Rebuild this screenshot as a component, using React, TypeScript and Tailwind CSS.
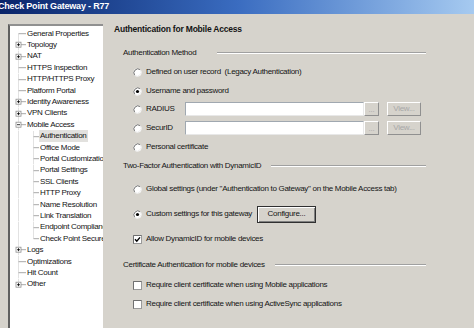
import React from 'react';

const font = { fontFamily: '"Liberation Sans", Arial, sans-serif' };

type Node = { label: string; level: 0 | 1; box?: '+' | '-'; selected?: boolean; last?: boolean };

const tree: Node[] = [
  { label: 'General Properties', level: 0 },
  { label: 'Topology', level: 0, box: '+' },
  { label: 'NAT', level: 0, box: '+' },
  { label: 'HTTPS Inspection', level: 0 },
  { label: 'HTTP/HTTPS Proxy', level: 0 },
  { label: 'Platform Portal', level: 0 },
  { label: 'Identity Awareness', level: 0, box: '+' },
  { label: 'VPN Clients', level: 0, box: '+' },
  { label: 'Mobile Access', level: 0, box: '-' },
  { label: 'Authentication', level: 1, selected: true },
  { label: 'Office Mode', level: 1 },
  { label: 'Portal Customization', level: 1 },
  { label: 'Portal Settings', level: 1 },
  { label: 'SSL Clients', level: 1 },
  { label: 'HTTP Proxy', level: 1 },
  { label: 'Name Resolution', level: 1 },
  { label: 'Link Translation', level: 1 },
  { label: 'Endpoint Compliance', level: 1 },
  { label: 'Check Point Secure Workspace', level: 1, last: true },
  { label: 'Logs', level: 0, box: '+' },
  { label: 'Optimizations', level: 0 },
  { label: 'Hit Count', level: 0 },
  { label: 'Other', level: 0, box: '+', last: true },
];

const Connector: React.FC<{ n: Node; first: boolean }> = ({ n, first }) => {
  const w = n.level === 0 ? 17 : 30;
  const h = 11.4;
  const mid = 5.7;
  return (
    <svg width={w} height={h} className="shrink-0 overflow-visible">
      {/* faint dotted tree lines */}
      <line x1={8.5} y1={first ? mid : 0} x2={8.5} y2={n.level === 0 && n.last ? mid : h} stroke="#e2e2e2" strokeWidth={1} />
      {n.level === 0 && <line x1={8.5} y1={mid} x2={16} y2={mid} stroke="#a8a8a8" strokeWidth={1} />}
      {n.level === 1 && (
        <>
          <line x1={23.5} y1={0} x2={23.5} y2={n.last ? mid : h} stroke="#e2e2e2" strokeWidth={1} />
          <line x1={23.5} y1={mid} x2={29} y2={mid} stroke="#a8a8a8" strokeWidth={1} />
        </>
      )}
      {n.box && (
        <>
          <rect x={6} y={3.2} width={5} height={5} fill="#fff" stroke="#909090" strokeWidth={0.8} />
          <line x1={7} y1={5.7} x2={10} y2={5.7} stroke="#000" strokeWidth={0.8} />
          {n.box === '+' && <line x1={8.5} y1={4.2} x2={8.5} y2={7.2} stroke="#000" strokeWidth={0.8} />}
        </>
      )}
    </svg>
  );
};

const Radio: React.FC<{ on?: boolean }> = ({ on }) => (
  <svg width={9} height={9} className="shrink-0">
    <circle cx={4.5} cy={4.5} r={4} fill="#fff" />
    <path d="M1.7 7.3 A4 4 0 0 1 7.3 1.7" fill="none" stroke="#707070" strokeWidth={1} />
    <path d="M7.3 1.7 A4 4 0 0 1 1.7 7.3" fill="none" stroke="#ececec" strokeWidth={1} />
    {on && <circle cx={4.5} cy={4.5} r={1.6} fill="#000" />}
  </svg>
);

const Check: React.FC<{ on?: boolean }> = ({ on }) => (
  <svg width={9} height={9} className="shrink-0">
    <rect x={0.5} y={0.5} width={8} height={8} fill="#fff" stroke="#9a9a9a" strokeWidth={1} />
    <path d="M0.5 8.5 V0.5 H8.5" fill="none" stroke="#707070" strokeWidth={1} />
    {on && <path d="M2 4.3 L3.8 6.3 L7 2.4" fill="none" stroke="#000" strokeWidth={1.4} />}
  </svg>
);

const Section: React.FC<{ label: string; gap: string; className: string }> = ({ label, gap, className }) => (
  <div className={`flex items-center h-[18px] pl-[9px] ${className}`}>
    <span className="whitespace-nowrap">{label}</span>
    <div className={`flex-1 ${gap} border-t border-[#a0a0a0] border-b border-b-white h-[2px]`} />
  </div>
);

const Opt: React.FC<{ children: React.ReactNode; className?: string; icon: React.ReactNode }> = ({ children, className = '', icon }) => (
  <div className={`flex items-center h-[18px] pl-[19px] ${className}`}>
    {icon}
    <span className="ml-[4px] whitespace-nowrap">{children}</span>
  </div>
);

const FieldRow: React.FC<{ label: string; className?: string }> = ({ label, className = '' }) => (
  <div className={`flex items-center h-[18px] pl-[19px] ${className}`}>
    <Radio />
    <span className="ml-[4px] w-[39px] whitespace-nowrap">{label}</span>
    <div className="w-[179px] h-[14px] bg-white border border-t-[#a0a8b0] border-l-[#a0a8b0] border-r-[#e8e8e8] border-b-[#e8e8e8]" />
    <div className="w-[15px] h-[14px] flex items-end justify-center text-[#a8a8a8] border border-t-white border-l-white border-r-[#909090] border-b-[#909090] leading-[10px]">...</div>
    <div className="ml-[8px] w-[34px] h-[14px] flex items-center justify-center text-[#a8a8a8] border border-t-white border-l-white border-r-[#909090] border-b-[#909090]">View...</div>
  </div>
);

const App: React.FC = () => {
  return (
    <div
      className="w-[474px] h-[328px] overflow-hidden bg-[#d6d3cc] flex flex-col text-[8px] tracking-[-0.3px] text-[#141414]"
      style={font}
    >
      <div className="h-[14px] shrink-0 flex items-center bg-gradient-to-r from-[#0a246a] via-[#3a6cc0] to-[#a6caf0]">
        <span className="-ml-[2px] text-white font-bold text-[9px] tracking-[-0.2px] whitespace-nowrap">Check Point Gateway - R77</span>
      </div>
      <div className="flex flex-1 min-h-0">
        <div className="pl-[8px] pt-[10px] shrink-0">
          <div className="w-[95px] h-[320px] bg-white border-l-2 border-t-2 border-l-[#606060] border-t-[#909090] overflow-hidden pt-[2px]">
            {tree.map((n, i) => (
              <div key={n.label} className="flex items-center h-[11.4px] whitespace-nowrap">
                <Connector n={n} first={i === 0} />
                <span className={n.selected ? 'bg-[#e2e1de] px-[1px] -ml-[1px]' : ''}>{n.label}</span>
              </div>
            ))}
          </div>
        </div>
        <div className="flex-1 pl-[11px] pr-[48px] pt-[6px] flex flex-col">
          <div className="h-[18px] flex items-center font-bold text-[8.5px] tracking-[-0.2px]">Authentication for Mobile Access</div>
          <Section label="Authentication Method" gap="ml-[21px]" className="mt-[6px]" />
          <Opt className="mt-[1px]" icon={<Radio />}>Defined on user record&nbsp; (Legacy Authentication)</Opt>
          <Opt className="mt-[1px]" icon={<Radio on />}>Username and password</Opt>
          <FieldRow label="RADIUS" />
          <FieldRow label="SecurID" className="mt-[1px]" />
          <Opt className="mt-[1px]" icon={<Radio />}>Personal certificate</Opt>
          <Section label="Two-Factor Authentication with DynamicID" gap="ml-[10px]" className="mt-[1px]" />
          <Opt className="mt-[5px]" icon={<Radio />}>Global settings (under "Authentication to Gateway" on the Mobile Access tab)</Opt>
          <div className="flex items-center h-[18px] pl-[19px] mt-[7px]">
            <Radio on />
            <span className="ml-[4px] w-[111px] whitespace-nowrap">Custom settings for this gateway</span>
            <div className="w-[59px] h-[17px] flex items-center justify-center border border-[#303030] shadow-[inset_1px_1px_0_#fff,inset_-1px_-1px_0_#808080]">Configure...</div>
          </div>
          <Opt className="mt-[7px]" icon={<Check on />}>Allow DynamicID for mobile devices</Opt>
          <Section label="Certificate Authentication for mobile devices" gap="ml-[10px]" className="mt-[8px]" />
          <Opt className="mt-[2px]" icon={<Check />}>Require client certificate when using Mobile applications</Opt>
          <Opt className="mt-[1px]" icon={<Check />}>Require client certificate when using ActiveSync applications</Opt>
        </div>
      </div>
    </div>
  );
};

export default App;
